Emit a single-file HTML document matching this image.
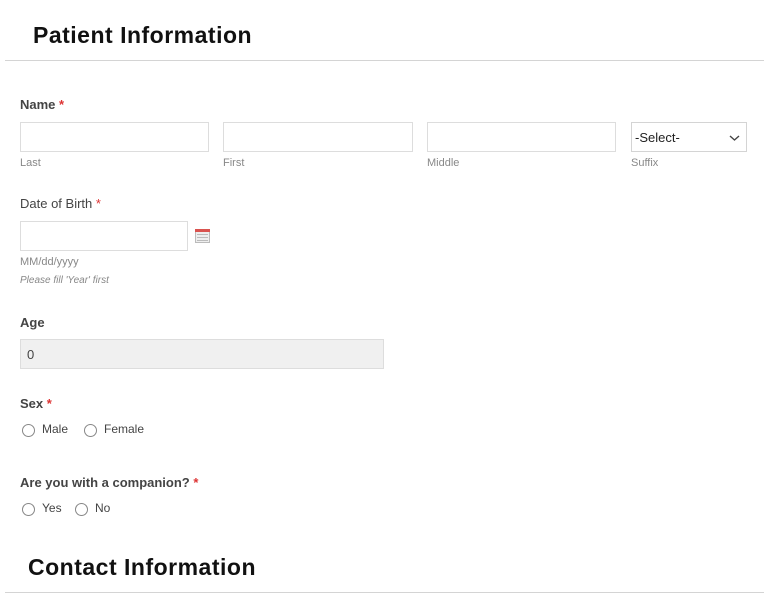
<!DOCTYPE html>
<html><head><style>
body{margin:0;width:778px;height:598px;background:#fff;font-family:"Liberation Sans",sans-serif;position:relative;overflow:hidden}
.a{position:absolute;white-space:nowrap}
h{position:absolute;font-weight:bold;font-size:23px;color:#111;letter-spacing:0.5px}
.hr{position:absolute;left:5px;right:14px;height:1px;background:#d4d4d4}
.lb{font-size:13px;color:#444;font-weight:bold}
.st{color:#d33}
.in{position:absolute;border:1px solid #ddd;background:#fff;box-sizing:border-box}
.sub{font-size:11px;color:#888}
.r{position:absolute;width:11px;height:11px;border:1px solid #888;border-radius:50%}
.rt{font-size:12px;color:#444}
</style></head><body>
<h style="left:33px;top:22px">Patient Information</h>
<div class="hr" style="top:60px"></div>
<div class="a lb" style="left:20px;top:97px">Name <span class="st">*</span></div>
<div class="in" style="left:20px;top:122px;width:189px;height:30px"></div>
<div class="in" style="left:223px;top:122px;width:190px;height:30px"></div>
<div class="in" style="left:427px;top:122px;width:189px;height:30px"></div>
<div class="in" style="left:631px;top:122px;width:116px;height:30px;border-color:#d4d4d4"><span class="a" style="left:3px;top:7px;font-size:13px;color:#222">-Select-</span>
<svg class="a" style="left:97px;top:11px" width="11" height="8"><path d="M1 2l4.5 4 4.5-4" stroke="#444" stroke-width="1.4" fill="none"/></svg></div>
<div class="a sub" style="left:20px;top:157px">Last</div>
<div class="a sub" style="left:223px;top:157px">First</div>
<div class="a sub" style="left:427px;top:157px">Middle</div>
<div class="a sub" style="left:631px;top:157px">Suffix</div>
<div class="a" style="left:20px;top:196px;font-size:13px;color:#444">Date of Birth <span class="st">*</span></div>
<div class="in" style="left:20px;top:221px;width:168px;height:30px"></div>
<svg class="a" style="left:195px;top:229px" width="15" height="14"><rect x="0.5" y="0.5" width="14" height="13" fill="#eee" stroke="#bbb"/><rect x="0" y="0" width="15" height="3" fill="#d9534f"/><g fill="#bbb"><rect x="2" y="5" width="11" height="1"/><rect x="2" y="8" width="11" height="1"/><rect x="2" y="11" width="11" height="1"/></g></svg>
<div class="a sub" style="left:20px;top:256px">MM/dd/yyyy</div>
<div class="a" style="left:20px;top:275px;font-size:10px;color:#888;font-style:italic">Please fill 'Year' first</div>
<div class="a lb" style="left:20px;top:315px">Age</div>
<div class="in" style="left:20px;top:339px;width:364px;height:30px;background:#f0f0f0;border-color:#ddd"><span class="a" style="left:6px;top:7px;font-size:13px;color:#444">0</span></div>
<div class="a lb" style="left:20px;top:396px">Sex <span class="st">*</span></div>
<div class="r" style="left:22px;top:424px"></div><div class="a rt" style="left:42px;top:422px">Male</div>
<div class="r" style="left:84px;top:424px"></div><div class="a rt" style="left:104px;top:422px">Female</div>
<div class="a lb" style="left:20px;top:475px">Are you with a companion? <span class="st">*</span></div>
<div class="r" style="left:22px;top:503px"></div><div class="a rt" style="left:42px;top:501px">Yes</div>
<div class="r" style="left:75px;top:503px"></div><div class="a rt" style="left:95px;top:501px">No</div>
<h style="left:28px;top:554px">Contact Information</h>
<div class="hr" style="top:592px"></div>
</body></html>
